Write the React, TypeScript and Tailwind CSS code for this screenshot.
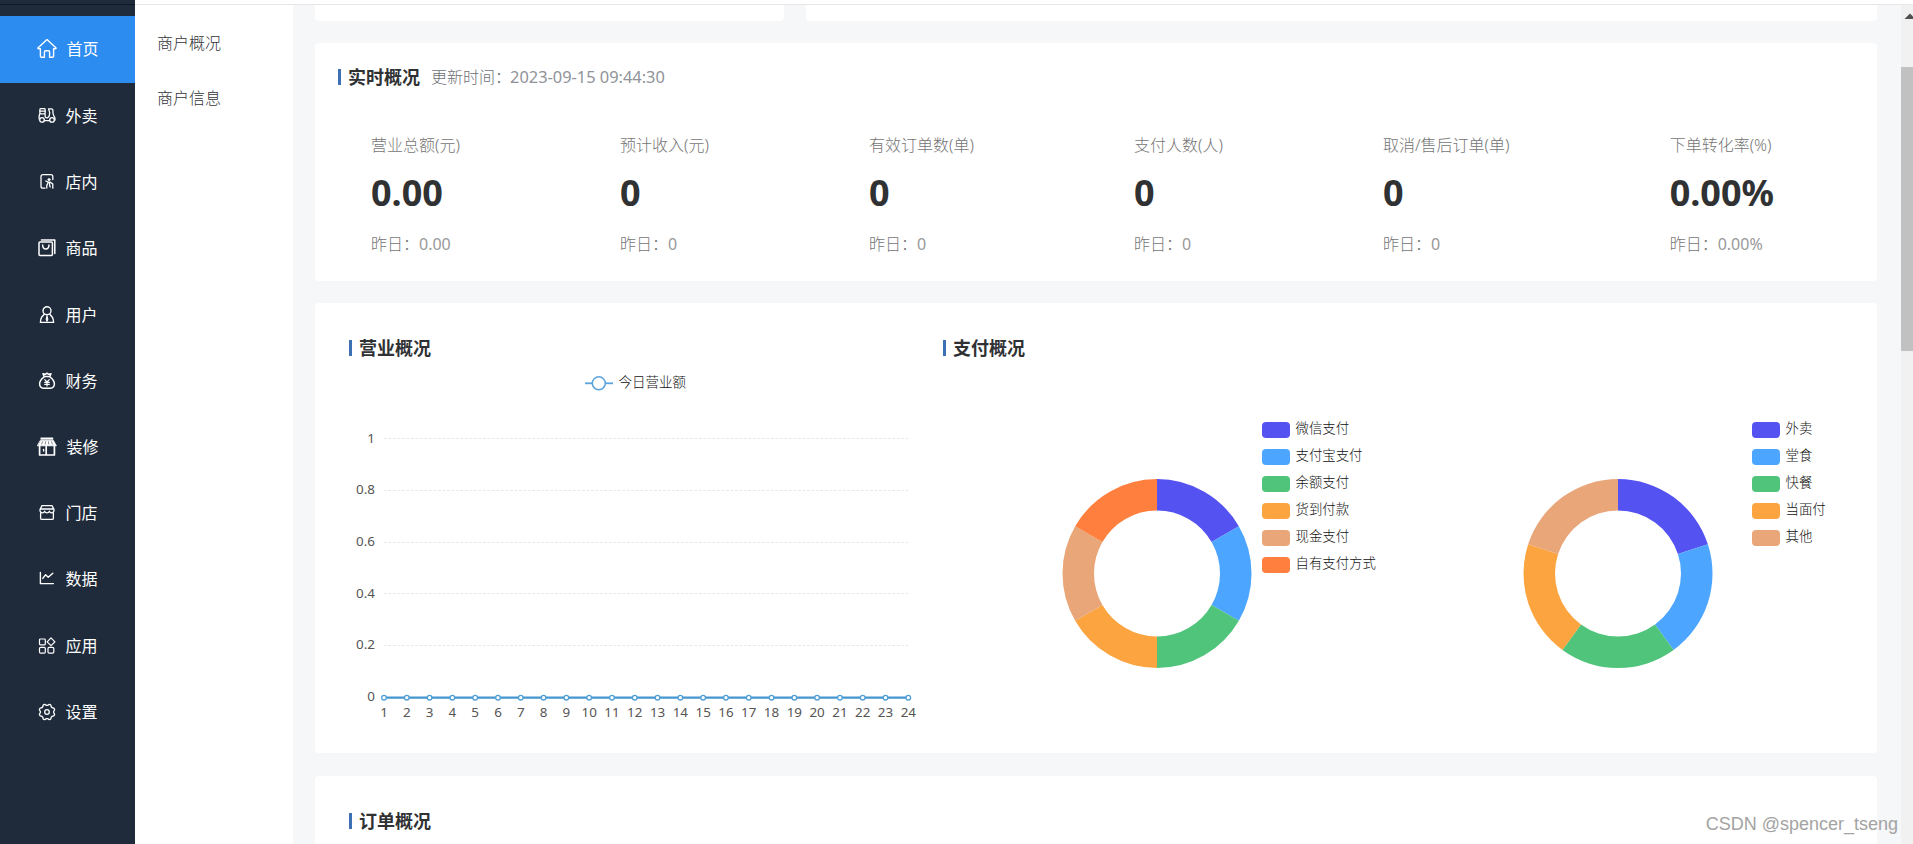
import React from "react";

type IconProps = { children: React.ReactNode; big?: boolean; sw?: number };

function Glyph({ children, big, sw = 1.5 }: IconProps) {
  return (
    <svg
      viewBox={big ? "0 0 20 20" : "0 0 18 18"}
      className={big ? "h-5 w-5 shrink-0" : "h-[18px] w-[18px] shrink-0"}
      fill="none"
      stroke="currentColor"
      strokeWidth={sw}
      strokeLinecap="round"
      strokeLinejoin="round"
    >
      {children}
    </svg>
  );
}

const gearOutline =
  Array.from({ length: 96 }, (_, i) => {
    const a = (i / 96) * Math.PI * 2;
    const wave = Math.cos(8 * (a + Math.PI / 8));
    const r = 7.3 + 0.7 * Math.sign(wave) * Math.sqrt(Math.abs(wave));
    return `${i ? "L" : "M"}${(9 + r * Math.cos(a)).toFixed(2)} ${(9 + r * Math.sin(a)).toFixed(2)}`;
  }).join(" ") + " Z";

const menu: { label: string; icon: React.ReactNode; active?: boolean }[] = [
  {
    label: "首页",
    active: true,
    icon: (
      <Glyph big sw={1.4}>
        <path d="M10 .6 L.9 9 Q.8 9.800 1.8 9.800 H3.4 V17.2 Q3.4 18.2 4.4 18.2 H7.4 V13.2 Q7.4 11.8 8.6 11.8 H11.4 Q12.6 11.8 12.6 13.2 V18.2 H15.6 Q16.6 18.2 16.6 17.2 V9.800 H18.2 Q19.2 9.800 19.1 9 Z" />
      </Glyph>
    ),
  },
  {
    label: "外卖",
    icon: (
      <Glyph sw={1.3}>
        <rect x="1.9" y="1.7" width="5.2" height="5.2" rx=".8" />
        <path d="M1.9 4.2 H7.1 M1.8 6.9 Q.8 9 1.2 12 M7.1 6.9 V9.3 Q7.500 11.200 9.400 10.8 Q12 9.4 11.600 5.4 L10.600 1.9 H13.6 Q15 2.1 15 4 Q14.6 6.6 15.9 8.8 Q17.4 10.8 16.9 13 M6.3 13.6 H11.6" />
        <circle cx="4" cy="12.900" r="2.300" />
        <circle cx="14" cy="12.900" r="2.300" />
      </Glyph>
    ),
  },
  {
    label: "店内",
    icon: (
      <Glyph sw={1.3}>
        <path d="M7 15.200 H5 Q3 15.200 3 13.200 V3.600 Q3 1.600 5 1.600 H12.800 Q14.800 1.600 14.800 3.600 V6.500" />
        <circle cx="11" cy="6.600" r="1.200" fill="currentColor" strokeWidth={0.6} />
        <path d="M7.800 8 L10.200 9.200 H12.400 L14.800 11 V15.200 M10.400 9.200 L8.800 12.400 V15 M11.600 9.500 V12.500 L12.200 14" />
      </Glyph>
    ),
  },
  {
    label: "商品",
    icon: (
      <Glyph sw={1.5}>
        <rect x="1" y="3" width="13.4" height="13.400" rx="1" />
        <path d="M3.400 1 H16.800 V14.400 M4.600 6 Q4.800 10 7.800 10 Q10.800 10 11 6" />
      </Glyph>
    ),
  },
  {
    label: "用户",
    icon: (
      <Glyph sw={1.4}>
        <circle cx="9" cy="4.800" r="4" />
        <path d="M6.200 8.200 L3.600 11.300 Q2.400 13.300 2.400 16.400 H15.600 Q15.600 13.300 14.400 11.300 L11.800 8.200" />
        <path d="M9 9.600 L8.200 13.300 L9 15.200 L9.800 13.300 Z" strokeWidth={1.1} />
      </Glyph>
    ),
  },
  {
    label: "财务",
    icon: (
      <Glyph sw={1.5}>
        <path d="M6.200 4.600 L5 1.800 L7.400 2.300 L9 1.200 L10.600 2.300 L13 1.800 L11.800 4.600 Z M6.200 4.800 Q1.600 8 1.600 12 Q1.800 16 5.500 16.200 H12.500 Q16.200 16 16.400 12 Q16.400 8 11.800 4.800" />
        <path d="M6.800 7.600 L9 10 L11.200 7.600 M9 10 V14 M6.700 10.300 H11.300 M6.700 12.300 H11.300" strokeWidth={1.2} />
      </Glyph>
    ),
  },
  {
    label: "装修",
    icon: (
      <Glyph big sw={1.4}>
        <path d="M4 .8 H16 V2.400 H4 Z" fill="currentColor" strokeWidth={0.5} />
        <path d="M3.600 3.400 H16.400 L19.400 8.800 H.6 Z" fill="currentColor" strokeWidth={0.8} />
        <path d="M5.600 4.800 L4.600 7 M8.600 4.800 L8.200 7 M11.400 4.800 L11.800 7 M14.400 4.800 L15.400 7" stroke="#5d6977" strokeWidth={0.8} />
        <path d="M2.600 9 V18 H17.400 V9 M9.200 9.500 V18" strokeWidth={1.7} />
        <path d="M6.600 12.500 V14" />
      </Glyph>
    ),
  },
  {
    label: "门店",
    icon: (
      <Glyph sw={1.3}>
        <path d="M4 1.600 H14 L16 5.500 V7 Q15 9 13.600 8.800 Q12 8.800 11.400 7.200 Q10.600 8.800 9 8.800 Q7.400 8.800 6.600 7.200 Q6 8.800 4.400 8.800 Q3 9 2 7 V5.500 Z M2.600 5 H15.400 M2.600 9 V14.200 Q2.600 15.400 4 15.400 H14 Q15.400 15.400 15.400 14.200 V9" />
      </Glyph>
    ),
  },
  {
    label: "数据",
    icon: (
      <Glyph sw={1.4}>
        <path d="M2.400 2.500 V13.600 H15.400 M4.800 8.400 L7.600 4.800 L10.200 7.200 L14.800 3.200" />
      </Glyph>
    ),
  },
  {
    label: "应用",
    icon: (
      <Glyph sw={1.2}>
        <rect x="1.500" y="2" width="5.800" height="5.800" rx=".8" />
        <rect x="1.500" y="10.400" width="5.800" height="5.800" rx="1.200" />
        <rect x="10" y="10.400" width="5.800" height="5.800" rx="1.200" />
        <path d="M13 .9 L16.900 4.800 L13 8.700 L9.100 4.800 Z" />
      </Glyph>
    ),
  },
  {
    label: "设置",
    icon: (
      <Glyph sw={1.3}>
        <path d={gearOutline} />
        <circle cx="9" cy="9" r="2.300" />
      </Glyph>
    ),
  },
];

const stats = [
  { label: "营业总额(元)", value: "0.00", prev: "0.00" },
  { label: "预计收入(元)", value: "0", prev: "0" },
  { label: "有效订单数(单)", value: "0", prev: "0" },
  { label: "支付人数(人)", value: "0", prev: "0" },
  { label: "取消/售后订单(单)", value: "0", prev: "0" },
  { label: "下单转化率(%)", value: "0.00%", prev: "0.00%" },
];

const payments = [
  { label: "微信支付", color: "#5552f2" },
  { label: "支付宝支付", color: "#4ca5ff" },
  { label: "余额支付", color: "#4fc47a" },
  { label: "货到付款", color: "#fba440" },
  { label: "现金支付", color: "#e8a679" },
  { label: "自有支付方式", color: "#ff7f3e" },
];

const channels = [
  { label: "外卖", color: "#5552f2" },
  { label: "堂食", color: "#4ca5ff" },
  { label: "快餐", color: "#4fc47a" },
  { label: "当面付", color: "#fba440" },
  { label: "其他", color: "#e8a679" },
];

function Title({ children }: { children: React.ReactNode }) {
  return (
    <div className="flex h-6 items-center">
      <span className="h-4 w-[3px] bg-[#3d70b5]" />
      <h2 className="ml-[7px] text-[18px] leading-6 font-bold text-[#303133]">{children}</h2>
    </div>
  );
}

function Donut({ slices }: { slices: { label: string; color: string }[] }) {
  const R = 94.5;
  const r = 63;
  const at = (radius: number, i: number) => {
    const a = (i / slices.length) * Math.PI * 2;
    return `${(95 + radius * Math.sin(a)).toFixed(2)} ${(94.5 - radius * Math.cos(a)).toFixed(2)}`;
  };
  return (
    <svg viewBox="0 0 190 190" className="mt-[75px] h-[190px] w-[190px] shrink-0">
      {slices.map((s, i) => (
        <path
          key={s.label}
          fill={s.color}
          d={`M${at(R, i)} A${R} ${R} 0 0 1 ${at(R, i + 1)} L${at(r, i + 1)} A${r} ${r} 0 0 0 ${at(r, i)} Z`}
        />
      ))}
    </svg>
  );
}

function Legend({ items }: { items: { label: string; color: string }[] }) {
  return (
    <ul className="mt-[12px]">
      {items.map((s) => (
        <li key={s.label} className="flex h-[27px] items-center">
          <span className="h-4 w-[28px] rounded-[4px]" style={{ background: s.color }} />
          <span className="relative -top-px ml-[5.500px] text-[13.400px] leading-none font-light whitespace-nowrap text-[#111]">{s.label}</span>
        </li>
      ))}
    </ul>
  );
}

function LineChart() {
  const x = (i: number) => 35 + (i * 524.3) / 23;
  const y = (v: number) => 327.7 - v * 258.5;
  return (
    <svg
      viewBox="0 0 580 356"
      className="h-[356px] w-[580px]"
      fontSize="13.4"
      fill="#555"
    >
      <line x1="236" x2="264" y1="13.300" y2="13.300" stroke="#5ba3dc" strokeWidth="1.8" />
      <circle cx="249.800" cy="13.300" r="6.500" fill="#fff" stroke="#5ba3dc" strokeWidth="1.5" />
      <text x="269.500" y="17" fill="#111" fontWeight="300" fontSize="13.500">今日营业额</text>
      {[0, 0.2, 0.4, 0.6, 0.8, 1].map((v) => (
        <g key={v}>
          {v > 0 && (
            <line x1="35" x2="559.300" y1={Math.round(y(v)) - 0.5} y2={Math.round(y(v)) - 0.5} stroke="#e6e8ea" strokeDasharray="2.7 1.800" />
          )}
          <text x="26" y={y(v) + 3.300} textAnchor="end">{v}</text>
        </g>
      ))}
      <line x1={x(0)} x2={x(23)} y1="327.700" y2="327.700" stroke="#4596cf" strokeWidth="2.2" />
      {Array.from({ length: 24 }, (_, i) => (
        <g key={i}>
          <circle cx={x(i)} cy="327.700" r="2.300" fill="#fff" stroke="#4f9fd6" strokeWidth="1.300" />
          <text x={x(i)} y="346.500" textAnchor="middle">{i + 1}</text>
        </g>
      ))}
    </svg>
  );
}

export default function App() {
  return (
    <div className="relative flex h-[844px] w-full overflow-hidden bg-white font-['Noto_Sans','Noto_Sans_CJK_SC',sans-serif]">
      <aside className="flex w-[135px] shrink-0 flex-col bg-[#1f2b3b] text-white">
        <div className="h-[5px] border-b border-[#0e1724]" />
        <nav className="mt-[11px] flex flex-col">
          {menu.map((m) => (
            <a
              key={m.label}
              className={
                m.active
                  ? "flex h-[67px] items-center justify-center gap-[9px] bg-[#2d8cf0] pb-px pl-px text-[16px] text-white"
                  : "flex h-[66.200px] items-center justify-center gap-[9px] pl-px text-[16px] text-white"
              }
            >
              {m.icon}
              <span className="leading-none">{m.label}</span>
            </a>
          ))}
        </nav>
      </aside>

      <div className="flex min-w-0 grow flex-col">
        <div className="h-[5px] shrink-0 border-b border-[#e6e6e8]" />
        <div className="flex min-h-0 grow">
          <div className="flex w-[158px] shrink-0 flex-col gap-[31px] bg-white pt-[26px] pl-[22px] text-[16px] leading-6 font-light text-[#333539]">
            <span>商户概况</span>
            <span>商户信息</span>
          </div>

          <main className="flex min-w-0 grow flex-col overflow-hidden bg-[#f6f7f8] pr-[24px] pl-[22px]">
            <div className="flex h-4 shrink-0 gap-[22px]">
              <div className="w-[469px] rounded-b-[4px] bg-white" />
              <div className="grow rounded-b-[4px] bg-white" />
            </div>

            <section className="mt-[22px] h-[238px] shrink-0 rounded-[4px] bg-white pt-[22px] pl-[23px]">
              <div className="flex items-center">
                <Title>实时概况</Title>
                <span className="ml-[11px] text-[16px] leading-6 font-light text-[#6c6f75]">
                  更新时间：<span className="-ml-px text-[16.400px] font-normal text-[#909399]">2023-09-15 09:44:30</span>
                </span>
              </div>
              <div className="mt-[44px] flex justify-between pr-[103px] pl-[33px]">
                {stats.map((s) => (
                  <div key={s.label} className="flex flex-col">
                    <span className="text-[16px] leading-6 font-light text-[#757575]">{s.label}</span>
                    <span className="mt-[10px] text-[36px] leading-[52px] font-bold text-[#303133]">{s.value}</span>
                    <span className="mt-[13px] text-[16px] leading-6 font-light text-[#757575]">
                      昨日：<span className="font-normal text-[#999]">{s.prev}</span>
                    </span>
                  </div>
                ))}
              </div>
            </section>

            <section className="mt-[22px] flex h-[450px] shrink-0 rounded-[4px] bg-white pt-[33px] pl-[34px]">
              <div className="w-[594px] shrink-0">
                <Title>营业概况</Title>
                <div className="mt-[10px]">
                  <LineChart />
                </div>
              </div>
              <div className="grow">
                <Title>支付概况</Title>
                <div className="mt-[44px] flex">
                  <div className="flex w-[461px] pl-[119px]">
                    <Donut slices={payments} />
                    <div className="ml-[10px]">
                      <Legend items={payments} />
                    </div>
                  </div>
                  <div className="flex pl-[119px]">
                    <Donut slices={channels} />
                    <div className="ml-[39px]">
                      <Legend items={channels} />
                    </div>
                  </div>
                </div>
              </div>
            </section>

            <section className="mt-[23px] h-[200px] shrink-0 rounded-[4px] bg-white pt-[33px] pl-[34px]">
              <Title>订单概况</Title>
            </section>
          </main>

          <div className="w-3 shrink-0 overflow-hidden bg-[#f1f1f1]">
            <svg viewBox="0 0 12 62" className="h-[62px] w-3">
              <path d="M3.500 14 L9 8.500 L14.500 14 Z" fill="#505050" />
            </svg>
            <div className="h-[284px] bg-[#c1c1c1]" />
          </div>
        </div>
      </div>

      <div className="absolute right-[15px] bottom-[7px] font-['Liberation_Sans',sans-serif] text-[18px] leading-[26px] text-[#a3a3a3]">
        CSDN @spencer_tseng
      </div>
    </div>
  );
}
